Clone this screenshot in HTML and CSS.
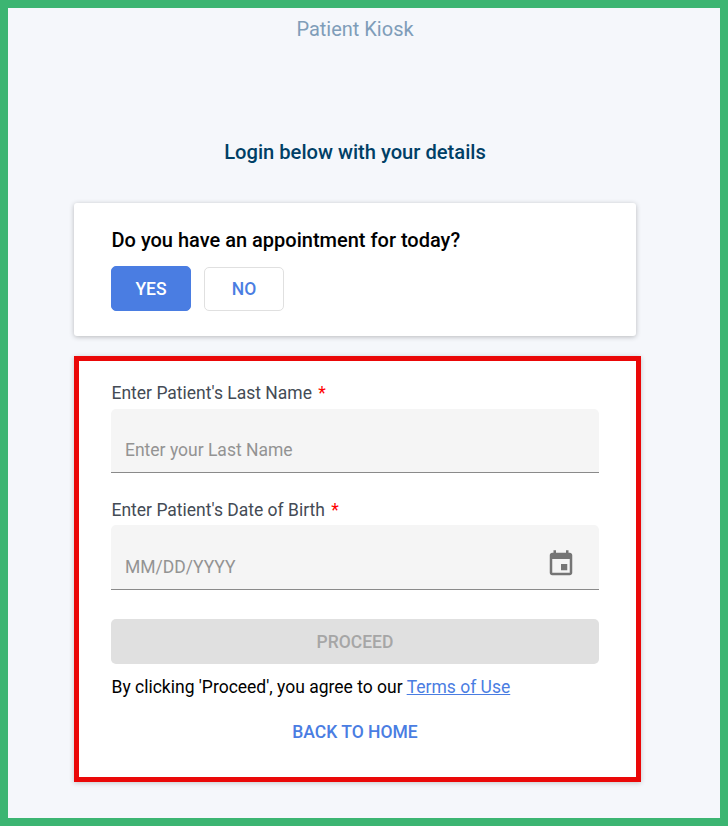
FILE: index.html
```html
<!DOCTYPE html>
<html lang="en">
<head>
<meta charset="utf-8">
<title>Patient Kiosk</title>
<link rel="stylesheet" href="styles.css">
</head>
<body>
<main class="frame">
  <div class="column">
    <header class="title">Patient Kiosk</header>
    <h1 class="heading">Login below with your details</h1>
    <section class="card">
      <p class="question">Do you have an appointment for today?</p>
      <div class="choices">
        <button class="choice choice-active">YES</button>
        <button class="choice">NO</button>
      </div>
    </section>
    <form class="form">
      <label class="label">Enter Patient's Last Name <span class="req">*</span></label>
      <div class="field"><span class="placeholder">Enter your Last Name</span></div>
      <label class="label label-dob">Enter Patient's Date of Birth <span class="req">*</span></label>
      <div class="field field-date">
        <span class="placeholder">MM/DD/YYYY</span>
        <svg class="cal" viewBox="0 0 24 24" width="30" height="30"><path fill="#757575" d="M17 12h-5v5h5v-5zM16 1v2H8V1H6v2H5c-1.11 0-1.99.9-1.99 2L3 19c0 1.1.89 2 2 2h14c1.1 0 2-.9 2-2V5c0-1.1-.9-2-2-2h-1V1h-2zm3 18H5V8h14v11z"/></svg>
      </div>
      <div class="proceed">PROCEED</div>
      <p class="terms">By clicking 'Proceed', you agree to our <a class="link" href="#">Terms of Use</a></p>
      <div class="back">BACK TO HOME</div>
    </form>
  </div>
</main>
</body>
</html>
```
FILE: styles.css
```css
* { box-sizing: border-box; }
html, body { margin: 0; padding: 0; }
body { font-family: Roboto, "Liberation Sans", sans-serif; }
.frame {
  width: 728px;
  height: 826px;
  border: 8px solid #3cb572;
  background: #f5f7fb;
  padding-left: 66px;
  overflow: hidden;
}
.column { width: 562px; display: flex; flex-direction: column; }
.title {
  text-align: center;
  font-size: 20px;
  line-height: 24px;
  height: 24px;
  margin-top: 9px;
  color: #7f9db9;
}
.heading {
  margin: 99px 0 0;
  text-align: center;
  font-size: 20.16px;
  line-height: 24px;
  font-weight: 500;
  color: #003f66;
}
.card {
  margin-top: 39px;
  height: 133px;
  background: #fff;
  border-radius: 3px;
  box-shadow: 0 1px 5px rgba(0,0,0,.25);
  padding: 25px 37px 0;
}
.question {
  margin: 0;
  padding-left: .5px;
  font-size: 20px;
  line-height: 24px;
  font-weight: 500;
  color: #000;
}
.choices { display: flex; align-items: flex-end; gap: 13px; margin-top: 14px; }
.choice {
  width: 80px;
  height: 44px;
  border: 1px solid #e0e0e0;
  border-radius: 5px;
  background: #fff;
  color: #4a7de2;
  font: 500 17.5px Roboto, sans-serif;
  padding: 0;
}
.choice-active { height: 45px; background: #4a7de2; border-color: #4a7de2; color: #fff; }
.form {
  margin-top: 20px;
  width: 567px;
  height: 426px;
  background: #fff;
  border: 5px solid #ea0808;
  box-shadow: 0 1px 5px rgba(0,0,0,.2);
  padding: 22px 37px 0 32px;
  display: flex;
  flex-direction: column;
}
.label { padding-left: .5px; font-size: 17.5px; line-height: 20px; color: #444b55; height: 20px; }
.req { color: #f00; margin-left: 2px; }
.label-dob { margin-top: 27px; }
.field {
  margin-top: 6px;
  width: 488px;
  height: 64px;
  background: #f5f5f5;
  border-radius: 5px 5px 0 0;
  border-bottom: 1px solid #8a8a8a;
  padding: 30px 14px 0;
  display: flex;
  justify-content: space-between;
  position: relative;
}
.placeholder { font-size: 17.5px; line-height: 22px; color: #939393; }
.field-date { height: 65px; margin-top: 5px; padding-top: 31px; }
.cal { position: absolute; right: 23px; top: 24px; }
.proceed {
  margin-top: 29px;
  width: 488px;
  height: 45px;
  background: #e0e0e0;
  border-radius: 5px;
  color: #a6a6a6;
  font-size: 17.5px;
  font-weight: 500;
  display: flex;
  align-items: center;
  justify-content: center;
}
.terms { margin: 12px 0 0; padding-left: .5px; font-size: 17.5px; line-height: 22px; color: #000; }
.link { color: #4a7de2; }
.back {
  margin-top: 23px;
  width: 488px;
  text-align: center;
  font-size: 17.5px;
  line-height: 22px;
  font-weight: 500;
  color: #4a7de2;
}
```
